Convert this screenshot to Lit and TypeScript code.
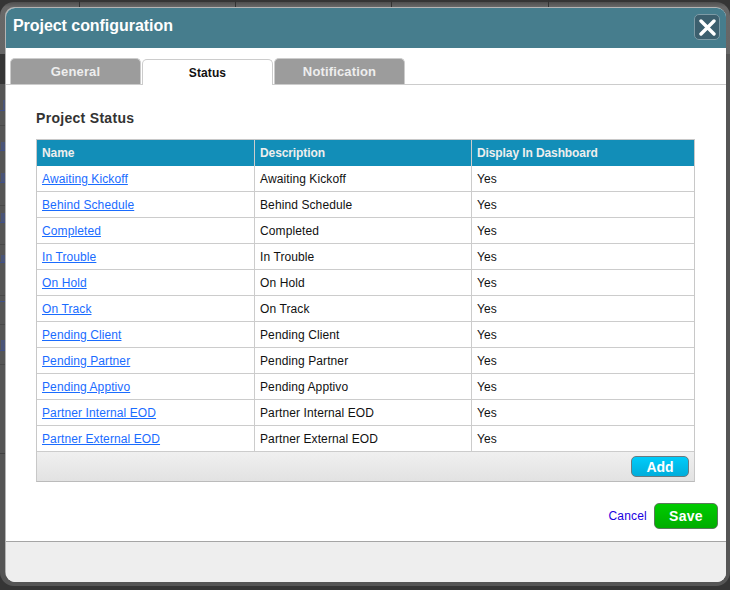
import { LitElement, html, css, svg } from "lit";
import { customElement } from "lit/decorators.js";

const ROWS = [
  "Awaiting Kickoff",
  "Behind Schedule",
  "Completed",
  "In Trouble",
  "On Hold",
  "On Track",
  "Pending Client",
  "Pending Partner",
  "Pending Apptivo",
  "Partner Internal EOD",
  "Partner External EOD",
];

/* Page behind the modal, seen through its translucent frame: [x, y, w, h, colour] */
const BEHIND: [number, number, number, number, string][] = [
  [0, 54, 5, 30, "#353535"],
  [79, 0, 1, 7, "#333"],
  [235, 0, 1, 7, "#333"],
  [391, 0, 1, 7, "#333"],
  [548, 0, 1, 7, "#333"],
  [3, 100, 2, 10, "#4a5578"],
  [0, 110, 5, 1, "#3f4f88"],
  [0, 125, 5, 1, "#484848"],
  [1, 142, 4, 8, "#4a5578"],
  [0, 150, 5, 1, "#3f4f88"],
  [1, 173, 4, 9, "#4a5578"],
  [0, 182, 5, 1, "#3f4f88"],
  [0, 205, 5, 1, "#484848"],
  [1, 213, 4, 9, "#4a5578"],
  [0, 222, 5, 1, "#3f4f88"],
  [0, 244, 5, 1, "#484848"],
  [1, 255, 4, 7, "#4a5578"],
  [0, 262, 5, 1, "#3f4f88"],
  [0, 295, 5, 1, "#484848"],
  [0, 301, 5, 1, "#3f4f88"],
  [0, 324, 5, 1, "#484848"],
  [1, 340, 4, 10, "#4a5578"],
  [0, 350, 5, 1, "#3f4f88"],
  [0, 364, 5, 1, "#484848"],
  [0, 453, 5, 1, "#404040"],
];

@customElement("app-root")
export class AppRoot extends LitElement {
  static styles = css`
    :host {
      display: block;
      position: relative;
      width: 730px;
      height: 590px;
      box-sizing: border-box;
      background: #353535;
      padding-top: 2px;
      font-family: "Liberation Sans", Arial, sans-serif;
      overflow: hidden;
    }
    .frame {
      box-sizing: border-box;
      width: 730px;
      height: 584px;
      background: linear-gradient(#4e4e4e, #686868 5px, #666 52px, #555 52px);
      border-radius: 14px;
      padding: 6px 4px 4px 6px;
    }
    .behind {
      position: absolute;
      left: 0;
      top: 0;
    }
    .dialog {
      position: relative;
      height: 574px;
      border-radius: 9px;
      display: flex;
      flex-direction: column;
      background: #fff;
      box-shadow: -1px -1px 0 0 #b4b4b4;
    }
    .head {
      height: 40px;
      flex: none;
      background: #467d8d;
      border-radius: 9px 9px 0 0;
      display: flex;
      align-items: center;
      justify-content: space-between;
      padding: 0 6px 0 7px;
      color: #fff;
      font-weight: bold;
      font-size: 16px;
      letter-spacing: -0.05px;
    }
    .head span {
      position: relative;
      top: -2px;
    }
    .close {
      box-sizing: border-box;
      width: 26px;
      height: 26px;
      background: #3c5f6e;
      border: 1px solid #7d9ba6;
      border-radius: 5px;
      display: flex;
      align-items: center;
      justify-content: center;
      position: relative;
      top: -1px;
    }
    .tabs {
      height: 37px;
      flex: none;
      box-sizing: border-box;
      display: flex;
      align-items: flex-end;
      gap: 1px;
      padding-left: 4px;
      border-bottom: 1px solid #ccc;
    }
    .tab {
      box-sizing: border-box;
      width: 131px;
      height: 26px;
      background: #9c9c9c;
      border: 1px solid #ccc;
      border-bottom: none;
      border-radius: 5px 5px 0 0;
      color: #eee;
      font-weight: bold;
      font-size: 13px;
      display: flex;
      align-items: center;
      justify-content: center;
      letter-spacing: 0.15px;
    }
    .tab.active {
      background: #fff;
      color: #111;
      font-size: 12px;
      letter-spacing: 0.1px;
      margin-bottom: -1px;
      padding-top: 1px;
    }
    .body {
      flex: 1;
      display: flex;
      flex-direction: column;
      padding: 25px 8px 0 30px;
    }
    h2 {
      margin: 0 0 13px;
      font-size: 14px;
      line-height: 16px;
      color: #333;
      letter-spacing: 0.3px;
      font-weight: bold;
    }
    .table {
      width: 659px;
      box-sizing: border-box;
      border: 1px solid #c8c8c8;
      border-bottom-color: #bbb;
    }
    .row {
      display: grid;
      grid-template-columns: 217px 217px 1fr;
      height: 26px;
      box-sizing: border-box;
      border-bottom: 1px solid #ccc;
      font-size: 12px;
      letter-spacing: 0.1px;
      color: #111;
    }
    .row > div {
      padding-left: 5px;
      display: flex;
      align-items: center;
      border-left: 1px solid #ccc;
    }
    .row > div:first-child {
      border-left: none;
    }
    .row a {
      color: #1a6cff;
      text-decoration: underline;
    }
    .row.th {
      background: #128eb8;
      color: #eee;
      font-weight: bold;
      letter-spacing: -0.1px;
      border-bottom: none;
    }
    .foot {
      height: 29px;
      background: linear-gradient(#f0f0f0, #e2e2e2);
      display: flex;
      align-items: center;
      justify-content: flex-end;
      padding-right: 5px;
    }
    .add {
      box-sizing: border-box;
      width: 58px;
      height: 21px;
      background: linear-gradient(#00ccfa, #00addb);
      border: 1px solid #6a7a80;
      border-radius: 5px;
      color: #fff;
      font-weight: bold;
      font-size: 14px;
      display: flex;
      align-items: center;
      justify-content: center;
    }
    .actions {
      display: flex;
      justify-content: flex-end;
      align-items: center;
      gap: 7px;
      margin-top: 21px;
    }
    .cancel {
      color: #1a00e0;
      font-size: 12px;
      letter-spacing: 0.2px;
    }
    .save {
      box-sizing: border-box;
      width: 64px;
      height: 26px;
      background: linear-gradient(#00cc00, #00ad00);
      border: 1px solid #5a7a5a;
      border-radius: 5px;
      color: #fff;
      font-weight: bold;
      font-size: 14px;
      letter-spacing: 0.3px;
      display: flex;
      align-items: center;
      justify-content: center;
    }
    .bottom {
      height: 40px;
      flex: none;
      background: #eee;
      border-top: 1px solid #a5a5a5;
      border-radius: 0 0 9px 9px;
    }
  `;

  render() {
    return html`
      <div class="frame">
        <svg class="behind" width="730" height="590" viewBox="0 0 730 590">
          ${BEHIND.map(
            ([x, y, w, h, c]) =>
              svg`<rect x=${x} y=${y} width=${w} height=${h} fill=${c} />`
          )}
        </svg>
        <div class="dialog">
          <div class="head">
            <span>Project configuration</span>
            <div class="close">
              <svg width="17" height="17" viewBox="0 0 17 17">
                ${svg`<path d="M2 2 L15 15 M15 2 L2 15" stroke="#fff" stroke-width="3.4" stroke-linecap="round" />`}
              </svg>
            </div>
          </div>
          <div class="tabs">
            <div class="tab">General</div>
            <div class="tab active">Status</div>
            <div class="tab">Notification</div>
          </div>
          <div class="body">
            <h2>Project Status</h2>
            <div class="table">
              <div class="row th">
                <div>Name</div>
                <div>Description</div>
                <div>Display In Dashboard</div>
              </div>
              ${ROWS.map(
                (r) => html`
                  <div class="row">
                    <div><a>${r}</a></div>
                    <div>${r}</div>
                    <div>Yes</div>
                  </div>
                `
              )}
              <div class="foot"><div class="add">Add</div></div>
            </div>
            <div class="actions">
              <span class="cancel">Cancel</span>
              <div class="save">Save</div>
            </div>
          </div>
          <div class="bottom"></div>
        </div>
      </div>
    `;
  }
}
